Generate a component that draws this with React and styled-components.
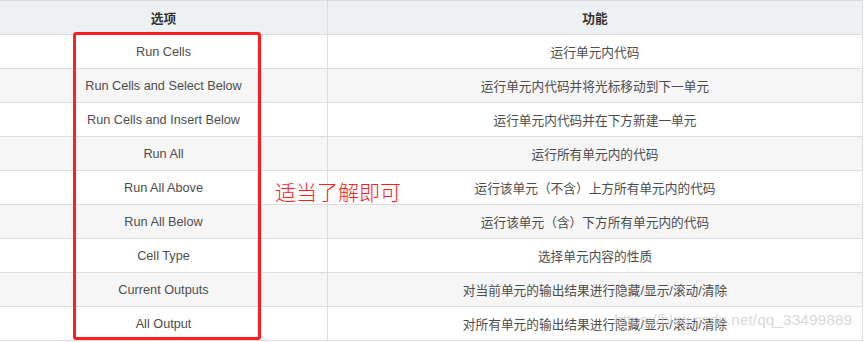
import styled, { createGlobalStyle } from "styled-components";

const GlobalStyle = createGlobalStyle`
  body {
    margin: 0;
    background: #ffffff;
    font-family: "Liberation Sans", "Noto Sans CJK SC", sans-serif;
  }
`;

const Page = styled.div`
  position: relative;
  width: 864px;
  height: 342px;
  overflow: hidden;
`;

const Table = styled.div`
  width: 863px;
  border-top: 1px solid #dddddd;
`;

const Row = styled.div`
  display: grid;
  grid-template-columns: 328px 535px;
  height: 34px;
  box-sizing: border-box;
  border-bottom: 1px solid #dddddd;
  background: ${({ $header, $striped }) =>
    $header ? "#eef1f4" : $striped ? "#f6f6f6" : "#ffffff"};
`;

const Cell = styled.div`
  display: flex;
  align-items: center;
  justify-content: center;
  border-right: 1px solid #dddddd;
  font-size: 12.7px;
  color: ${({ $header }) => ($header ? "#333333" : "#4d4d4d")};
  font-weight: ${({ $header }) => ($header ? "bold" : "normal")};
  white-space: nowrap;
`;

const Highlight = styled.div`
  position: absolute;
  left: 73px;
  top: 32px;
  width: 188px;
  height: 308px;
  box-sizing: border-box;
  border: 3px solid #ff1f1f;
  border-radius: 3px;
  pointer-events: none;
`;

const Note = styled.div`
  position: absolute;
  left: 275px;
  top: 176px;
  font-family: "Noto Sans CJK SC", sans-serif;
  font-size: 21px;
  font-weight: 300;
  color: #ff2020;
  letter-spacing: 0;
`;

const Watermark = styled.div`
  position: absolute;
  right: 12px;
  top: 311px;
  font-family: "Liberation Sans", sans-serif;
  font-size: 15.5px;
  color: rgba(190, 190, 190, 0.6);
  pointer-events: none;
`;

const rows = [
  ["Run Cells", "运行单元内代码"],
  ["Run Cells and Select Below", "运行单元内代码并将光标移动到下一单元"],
  ["Run Cells and Insert Below", "运行单元内代码并在下方新建一单元"],
  ["Run All", "运行所有单元内的代码"],
  ["Run All Above", "运行该单元（不含）上方所有单元内的代码"],
  ["Run All Below", "运行该单元（含）下方所有单元内的代码"],
  ["Cell Type", "选择单元内容的性质"],
  ["Current Outputs", "对当前单元的输出结果进行隐藏/显示/滚动/清除"],
  ["All Output", "对所有单元的输出结果进行隐藏/显示/滚动/清除"],
];

export default function App() {
  return (
    <Page>
      <GlobalStyle />
      <Table>
        <Row $header>
          <Cell $header>选项</Cell>
          <Cell $header>功能</Cell>
        </Row>
        {rows.map(([option, desc], index) => (
          <Row key={option} $striped={index % 2 === 1}>
            <Cell>{option}</Cell>
            <Cell>{desc}</Cell>
          </Row>
        ))}
      </Table>
      <Highlight />
      <Note>适当了解即可</Note>
      <Watermark>https://blog.csdn.net/qq_33499889</Watermark>
    </Page>
  );
}
